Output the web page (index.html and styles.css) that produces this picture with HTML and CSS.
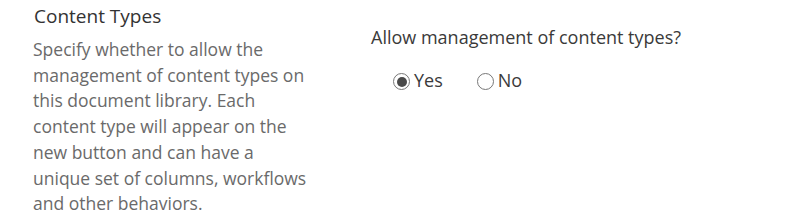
FILE: index.html
```html
<!DOCTYPE html>
<html>
<head>
<meta charset="utf-8">
<link rel="stylesheet" href="styles.css">
</head>
<body>
<div class="section">
  <div class="desc">
    <h3 class="title">Content Types</h3>
    <p class="text">Specify whether to allow the management of content types on this document library. Each content type will appear on the new button and can have a unique set of columns, workflows and other behaviors.</p>
  </div>
  <div class="field">
    <div class="label">Allow management of content types?</div>
    <div class="options">
      <label class="opt"><span class="radio checked"></span>Yes</label>
      <label class="opt"><span class="radio"></span>No</label>
    </div>
  </div>
</div>
</body>
</html>
```
FILE: styles.css
```css
html, body { margin: 0; padding: 0; background: #fff; }
body { font-family: "Open Sans", "Noto Sans", sans-serif; }
.section { display: flex; padding: 4px 0 0 33px; }
.desc { width: 275px; flex: none; }
.title { margin: 0 0 0 1px; font-size: 19px; font-weight: 400; color: #333; line-height: 24px; }
.text { margin: 9px 0 0; font-size: 17.5px; line-height: 25.7px; color: #6a6a6a; }
.field { margin-left: 63px; padding-top: 21px; }
.label { font-size: 18px; color: #3a3a3a; line-height: 24px; }
.options { display: flex; gap: 34px; margin-top: 19px; padding-left: 22px; }
.opt { display: flex; align-items: center; font-size: 18px; color: #3a3a3a; line-height: 24px; }
.radio { width: 17px; height: 17px; border: 1px solid #777; border-radius: 50%; box-sizing: border-box; margin: 3px 4px 0 0; position: relative; }
.radio.checked::after { content: ""; position: absolute; left: 2.5px; top: 2.5px; width: 10px; height: 10px; border-radius: 50%; background: #4a4a4a; }
```
